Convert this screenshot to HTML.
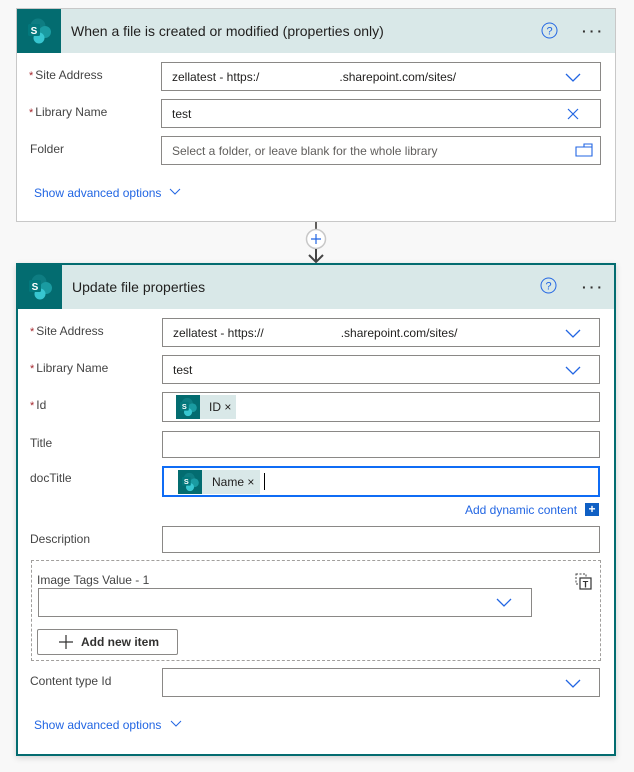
<!DOCTYPE html>
<html><head><meta charset="utf-8"><style>
*{box-sizing:border-box;margin:0;padding:0}
body{width:634px;height:772px;background:#f8f8f8;font-family:"Liberation Sans",sans-serif;position:relative;overflow:hidden;color:#323130}
.a{position:absolute}
.card{position:absolute;background:#fff}
.hdr{position:absolute;background:#d9e8e8}
.ico{position:absolute;background:#036c70}
.lbl{position:absolute;font-size:12px;color:#444;}
.req::before{content:"*";color:#a4262c;font-size:11px;margin-right:2px}
.inp{position:absolute;border:1px solid #8a8886;background:#fff;font-size:12px;color:#201f1e;padding-left:10px;display:flex;align-items:center}
.link{position:absolute;font-size:12px;color:#2266e3}
.title{position:absolute;font-size:14px;color:#201f1e}
.dots{position:absolute;font-size:14px;letter-spacing:3px;color:#323130;font-weight:bold}
.tok{display:inline-flex;align-items:center;background:#d9e8e8;height:24px;font-size:12px}
.tok .ti{width:24px;height:24px;background:#036c70;display:flex;align-items:center;justify-content:center}
</style></head><body>
<svg width="0" height="0" style="position:absolute"><defs>
<symbol id="sp" viewBox="0 0 30 30"><circle cx="14" cy="10" r="7.5" fill="#0e7d82"/><circle cx="21" cy="16" r="6" fill="#1a9ba1"/><circle cx="15" cy="22" r="5.5" fill="#37c6d0"/><rect x="4" y="8" width="12" height="12" rx="1.5" fill="#03787c"/><text x="10" y="18" font-size="10" font-weight="bold" fill="#fff" text-anchor="middle" font-family="Liberation Sans">S</text></symbol>
<symbol id="chev" viewBox="0 0 16 10"><path d="M1 1 L8 8 L15 1" fill="none" stroke="#2266e3" stroke-width="1.3"/></symbol>
</defs></svg>

<!-- Card 1 -->
<div class="card" style="left:16px;top:8px;width:600px;height:214px;border:1px solid #c8c8c8"></div>
<div class="hdr" style="left:17px;top:9px;width:598px;height:44px"></div>
<div class="ico" style="left:17px;top:9px;width:44px;height:44px"><svg class="a" style="left:7px;top:7px" width="30" height="30"><use href="#sp"/></svg></div>
<div class="title" style="left:71px;top:23px">When a file is created or modified (properties only)</div>
<svg class="a" style="left:541px;top:22px" width="17" height="17"><circle cx="8.5" cy="8.5" r="7.5" fill="none" stroke="#2266e3"/><text x="8.5" y="12.5" font-size="11" fill="#2266e3" text-anchor="middle" font-family="Liberation Sans">?</text></svg>
<div class="dots" style="left:582px;top:23px">···</div>

<div class="lbl req" style="left:29px;top:68px">Site Address</div>
<div class="inp" style="left:161px;top:62px;width:440px;height:29px">zellatest - https:/<span style="display:inline-block;width:80px"></span>.sharepoint.com/sites/</div>
<svg class="a" style="left:565px;top:73px" width="16" height="10"><use href="#chev"/></svg>
<div class="lbl req" style="left:29px;top:105px">Library Name</div>
<div class="inp" style="left:161px;top:99px;width:440px;height:29px">test</div>
<svg class="a" style="left:567px;top:108px" width="12" height="12"><path d="M1 1L11 11M11 1L1 11" stroke="#2266e3" stroke-width="1.2"/></svg>
<div class="lbl" style="left:30px;top:142px">Folder</div>
<div class="inp" style="left:161px;top:136px;width:440px;height:29px;color:#605e5c">Select a folder, or leave blank for the whole library</div>
<svg class="a" style="left:575px;top:143px" width="18" height="14"><path d="M1 4H17V13H1Z M9 4V1H17V4" fill="none" stroke="#2266e3" stroke-width="1.1"/></svg>
<div class="link" style="left:34px;top:186px">Show advanced options</div>
<svg class="a" style="left:169px;top:188px" width="12" height="8"><path d="M1 1L6 6L11 1" fill="none" stroke="#2266e3" stroke-width="1"/></svg>

<!-- connector -->
<div class="a" style="left:315px;top:222px;width:2px;height:8px;background:#605e5c"></div>
<svg class="a" style="left:305px;top:228px" width="22" height="36"><circle cx="11" cy="11" r="9.5" fill="#fff" stroke="#c8c8c8" stroke-width="1.5"/><path d="M11 6V16M6 11H16" stroke="#2266e3" stroke-width="1.2"/><path d="M11 21V34M4 27L11 34L18 27" fill="none" stroke="#444" stroke-width="2"/></svg>

<!-- Card 2 -->
<div class="card" style="left:16px;top:263px;width:600px;height:493px;border:2px solid #036c70;box-shadow:0 2px 6px rgba(0,0,0,.15)"></div>
<div class="hdr" style="left:18px;top:265px;width:596px;height:44px"></div>
<div class="ico" style="left:18px;top:265px;width:44px;height:44px"><svg class="a" style="left:7px;top:7px" width="30" height="30"><use href="#sp"/></svg></div>
<div class="title" style="left:72px;top:279px">Update file properties</div>
<svg class="a" style="left:540px;top:277px" width="17" height="17"><circle cx="8.5" cy="8.5" r="7.5" fill="none" stroke="#2266e3"/><text x="8.5" y="12.5" font-size="11" fill="#2266e3" text-anchor="middle" font-family="Liberation Sans">?</text></svg>
<div class="dots" style="left:582px;top:279px">···</div>

<div class="lbl req" style="left:30px;top:324px">Site Address</div>
<div class="inp" style="left:162px;top:318px;width:438px;height:29px">zellatest - https://<span style="display:inline-block;width:77px"></span>.sharepoint.com/sites/</div>
<svg class="a" style="left:565px;top:329px" width="16" height="10"><use href="#chev"/></svg>
<div class="lbl req" style="left:30px;top:361px">Library Name</div>
<div class="inp" style="left:162px;top:355px;width:438px;height:29px">test</div>
<svg class="a" style="left:565px;top:366px" width="16" height="10"><use href="#chev"/></svg>
<div class="lbl req" style="left:30px;top:398px">Id</div>
<div class="inp" style="left:162px;top:392px;width:438px;height:30px;padding-left:13px"><span class="tok"><span class="ti"><svg width="22" height="22"><use href="#sp"/></svg></span><span style="padding:0 5px 0 9px">ID ×</span></span></div>
<div class="lbl" style="left:30px;top:436px">Title</div>
<div class="inp" style="left:162px;top:431px;width:438px;height:27px"></div>
<div class="lbl" style="left:30px;top:471px">docTitle</div>
<div class="inp" style="left:162px;top:466px;width:438px;height:31px;border:2px solid #0f6cf5;padding-left:14px"><span class="tok"><span class="ti"><svg width="22" height="22"><use href="#sp"/></svg></span><span style="padding:0 6px 0 10px">Name ×</span></span><span style="width:1px;height:17px;background:#000;margin-left:4px"></span></div>
<div class="link" style="left:465px;top:503px">Add dynamic content</div>
<div class="a" style="left:585px;top:503px;width:14px;height:13px;background:#0f5fc4;color:#fff;font-size:12px;font-weight:bold;text-align:center;line-height:13px">+</div>
<div class="lbl" style="left:30px;top:532px">Description</div>
<div class="inp" style="left:162px;top:526px;width:438px;height:27px"></div>

<div class="a" style="left:31px;top:560px;width:570px;height:101px;border:1px dashed #a19f9d"></div>
<div class="lbl" style="left:37px;top:573px">Image Tags Value - 1</div>
<svg class="a" style="left:575px;top:573px" width="18" height="18"><rect x="1" y="1" width="10" height="10" fill="none" stroke="#444" stroke-dasharray="2 1.5"/><rect x="5" y="5" width="11" height="11" fill="#fff" stroke="#333" stroke-width="1.2"/><text x="10.5" y="14.5" font-size="9" font-weight="bold" text-anchor="middle" fill="#333" font-family="Liberation Sans">T</text></svg>
<div class="inp" style="left:38px;top:588px;width:494px;height:29px"></div>
<svg class="a" style="left:496px;top:598px" width="16" height="10"><use href="#chev"/></svg>
<div class="a" style="left:37px;top:629px;width:141px;height:26px;border:1px solid #8a8886;border-radius:2px;background:#fff;font-size:12px;font-weight:bold;color:#323130;display:flex;align-items:center"><svg style="margin:0 7px 0 20px" width="16" height="16"><path d="M8 1V15M1 8H15" stroke="#323130" stroke-width="1.2"/></svg>Add new item</div>

<div class="lbl" style="left:30px;top:674px">Content type Id</div>
<div class="inp" style="left:162px;top:668px;width:438px;height:29px"></div>
<svg class="a" style="left:565px;top:679px" width="16" height="10"><use href="#chev"/></svg>
<div class="link" style="left:34px;top:718px">Show advanced options</div>
<svg class="a" style="left:170px;top:720px" width="12" height="8"><path d="M1 1L6 6L11 1" fill="none" stroke="#2266e3" stroke-width="1"/></svg>
</body></html>
